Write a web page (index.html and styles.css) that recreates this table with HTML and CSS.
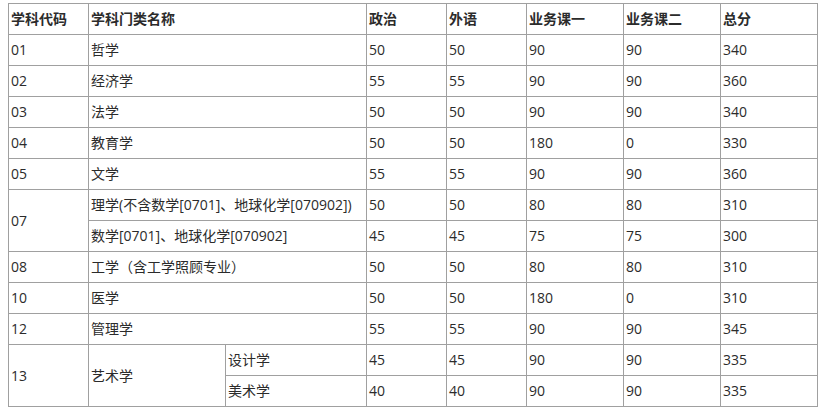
FILE: index.html
```html
<!DOCTYPE html>
<html lang="zh-CN">
<head>
<meta charset="utf-8">
<link rel="stylesheet" href="styles.css">
</head>
<body>
<table class="scores">
  <colgroup>
    <col class="c-code">
    <col class="c-name1">
    <col class="c-name2">
    <col class="c-sm">
    <col class="c-sm">
    <col class="c-md">
    <col class="c-md">
    <col class="c-md">
  </colgroup>
  <thead>
    <tr><th>学科代码</th><th colspan="2">学科门类名称</th><th>政治</th><th>外语</th><th>业务课一</th><th>业务课二</th><th>总分</th></tr>
  </thead>
  <tbody>
    <tr><td>01</td><td colspan="2">哲学</td><td>50</td><td>50</td><td>90</td><td>90</td><td>340</td></tr>
    <tr><td>02</td><td colspan="2">经济学</td><td>55</td><td>55</td><td>90</td><td>90</td><td>360</td></tr>
    <tr><td>03</td><td colspan="2">法学</td><td>50</td><td>50</td><td>90</td><td>90</td><td>340</td></tr>
    <tr><td>04</td><td colspan="2">教育学</td><td>50</td><td>50</td><td>180</td><td>0</td><td>330</td></tr>
    <tr><td>05</td><td colspan="2">文学</td><td>55</td><td>55</td><td>90</td><td>90</td><td>360</td></tr>
    <tr><td rowspan="2">07</td><td colspan="2">理学(不含数学[0701]、地球化学[070902])</td><td>50</td><td>50</td><td>80</td><td>80</td><td>310</td></tr>
    <tr><td colspan="2">数学[0701]、地球化学[070902]</td><td>45</td><td>45</td><td>75</td><td>75</td><td>300</td></tr>
    <tr><td>08</td><td colspan="2">工学（含工学照顾专业）</td><td>50</td><td>50</td><td>80</td><td>80</td><td>310</td></tr>
    <tr><td>10</td><td colspan="2">医学</td><td>50</td><td>50</td><td>180</td><td>0</td><td>310</td></tr>
    <tr><td>12</td><td colspan="2">管理学</td><td>55</td><td>55</td><td>90</td><td>90</td><td>345</td></tr>
    <tr><td rowspan="2">13</td><td rowspan="2">艺术学</td><td>设计学</td><td>45</td><td>45</td><td>90</td><td>90</td><td>335</td></tr>
    <tr><td>美术学</td><td>40</td><td>40</td><td>90</td><td>90</td><td>335</td></tr>
  </tbody>
</table>
</body>
</html>
```

FILE: styles.css
```css
html, body {
  margin: 0;
  padding: 0;
  background: #ffffff;
}
body {
  padding: 3px 0 0 8px;
  font-family: "Open Sans", "Noto Sans CJK SC", sans-serif;
  font-size: 14px;
  color: #2b2b2b;
}
.scores {
  border-collapse: collapse;
  table-layout: fixed;
  width: 810px;
}
.c-code { width: 80px; }
.c-name1 { width: 137px; }
.c-name2 { width: 141px; }
.c-sm { width: 80px; }
.c-md { width: 97px; }
.scores th,
.scores td {
  border: 1px solid #a0a0a0;
  height: 31px;
  padding: 0 2px;
  box-sizing: border-box;
  text-align: left;
  vertical-align: middle;
  white-space: nowrap;
  line-height: 20px;
}
.scores th {
  font-weight: bold;
  color: #2b2b2b;
}
```
